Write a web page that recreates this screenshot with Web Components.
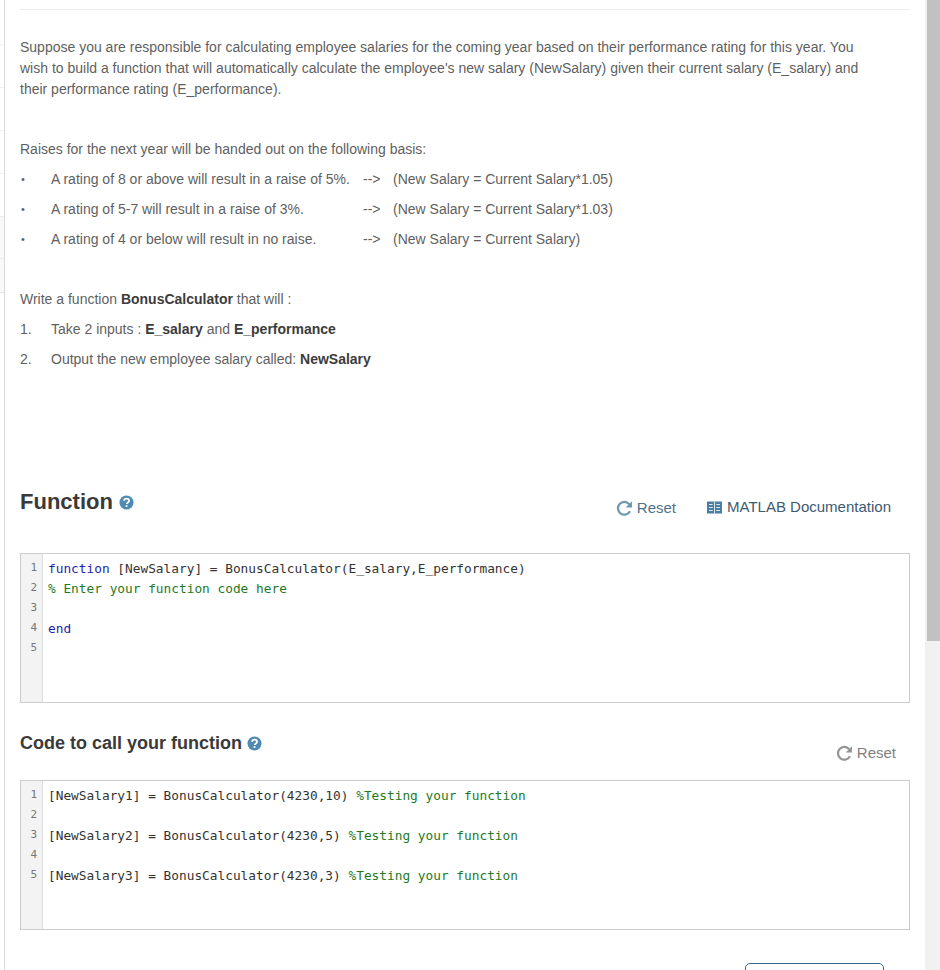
<!DOCTYPE html>
<html>
<head>
<meta charset="utf-8">
<title>Function</title>
<style>
  html, body { margin: 0; height: 100%; overflow: hidden; background: #fff; }
  body { font-family: "Liberation Sans", Arial, sans-serif; color: #5f5f5f; }
</style>
</head>
<body>

<problem-page>
  <page-rule></page-rule>

  <prose-line>Suppose you are responsible for calculating employee salaries for the coming year based on their performance rating for this year. You wish to build a function that will automatically calculate the employee's new salary (NewSalary) given their current salary (E_salary) and their performance rating (E_performance).</prose-line>
  <prose-line></prose-line>
  <prose-line>Raises for the next year will be handed out on the following basis:</prose-line>
  <raise-row mark="•" formula="(New Salary = Current Salary*1.05)">A rating of 8 or above will result in a raise of 5%.</raise-row>
  <raise-row mark="•" formula="(New Salary = Current Salary*1.03)">A rating of 5-7 will result in a raise of 3%.</raise-row>
  <raise-row mark="•" formula="(New Salary = Current Salary)">A rating of 4 or below will result in no raise.</raise-row>
  <prose-line></prose-line>
  <prose-line>Write a function <b-text>BonusCalculator</b-text> that will :</prose-line>
  <raise-row mark="1.">Take 2 inputs : <b-text>E_salary</b-text> and <b-text>E_performance</b-text></raise-row>
  <raise-row mark="2.">Output the new employee salary called: <b-text>NewSalary</b-text></raise-row>

  <section-head level="1" title="Function" style="margin-top:119px">
    <reset-link tone="blue"></reset-link>
    <doc-link>MATLAB Documentation</doc-link>
  </section-head>
  <code-editor style="margin-top:35px">
    <code-line><code-token kind="kw">function</code-token> [NewSalary] = BonusCalculator(E_salary,E_performance)</code-line>
    <code-line><code-token kind="cm">% Enter your function code here</code-token></code-line>
    <code-line></code-line>
    <code-line><code-token kind="kw">end</code-token></code-line>
    <code-line></code-line>
  </code-editor>

  <section-head level="2" title="Code to call your function" style="margin-top:27px">
    <reset-link tone="grey"></reset-link>
  </section-head>
  <code-editor style="margin-top:17px">
    <code-line>[NewSalary1] = BonusCalculator(4230,10) <code-token kind="cm">%Testing your function</code-token></code-line>
    <code-line></code-line>
    <code-line>[NewSalary2] = BonusCalculator(4230,5) <code-token kind="cm">%Testing your function</code-token></code-line>
    <code-line></code-line>
    <code-line>[NewSalary3] = BonusCalculator(4230,3) <code-token kind="cm">%Testing your function</code-token></code-line>
  </code-editor>

  <submit-stub></submit-stub>
</problem-page>

<script>
"use strict";

// Templates are written indented, so drop the whitespace between tags:
// code lines use white-space: pre and would render it as line breaks.
function shadow(el, html) {
  el.attachShadow({ mode: "open" }).innerHTML = html.replace(/>\s+</g, "><").trim();
}

class ProblemPage extends HTMLElement {
  constructor() {
    super();
    shadow(this, `
<style>
:host {
  display: flex;
  height: 970px;
  overflow: hidden;
}
.rail {
  flex: 0 0 4px;
  border-right: 1px solid #d9d9d9;
  background:
    linear-gradient(#eee, #eee) 0 44px / 100% 1px no-repeat,
    linear-gradient(#eee, #eee) 0 87px / 100% 1px no-repeat,
    linear-gradient(#eee, #eee) 0 130px / 100% 1px no-repeat,
    linear-gradient(#eee, #eee) 0 173px / 100% 1px no-repeat,
    linear-gradient(#eee, #eee) 0 216px / 100% 1px no-repeat,
    linear-gradient(#eee, #eee) 0 258px / 100% 1px no-repeat,
    linear-gradient(#e4e4e4, #e4e4e4) 0 292px / 100% 1px no-repeat,
    linear-gradient(#f9f9f9, #f9f9f9) 0 216px / 100% 76px no-repeat;
}
main {
  flex: 1;
  min-width: 0;
  padding: 9px 15px 0;
}
.track {
  flex: 0 0 13px;
  padding-left: 2px;
  background: #f1f1f1;
}
.thumb {
  height: 641px;
  background: #c1c1c1;
}
</style>
<div class="rail"></div>
<main><slot></slot></main>
<div class="track"><div class="thumb"></div></div>`);
  }
}
customElements.define("problem-page", ProblemPage);

class PageRule extends HTMLElement {
  constructor() {
    super();
    shadow(this, `<style>:host { display: block; height: 1px; background: #ececec; margin-bottom: 27px; }</style>`);
  }
}
customElements.define("page-rule", PageRule);

class ProseLine extends HTMLElement {
  constructor() {
    super();
    shadow(this, `
<style>
:host {
  display: block;
  max-width: 850px;
  min-height: 21px;
  margin-bottom: 9px;
  font-size: 14px;
  line-height: 21px;
  color: #5f5f5f;
}
</style>
<slot></slot>`);
  }
}
customElements.define("prose-line", ProseLine);

class BText extends HTMLElement {
  constructor() {
    super();
    shadow(this, `<style>:host { font-weight: 700; color: #3c3c3c; }</style><slot></slot>`);
  }
}
customElements.define("b-text", BText);

class RaiseRow extends HTMLElement {
  constructor() {
    super();
    shadow(this, `
<style>
:host {
  display: grid;
  grid-template-columns: 31px 312px 30px 1fr;
  height: 21px;
  margin-bottom: 9px;
  font-size: 14px;
  line-height: 21px;
  color: #5f5f5f;
  white-space: nowrap;
}
:host(:not([formula])) { grid-template-columns: 31px 1fr; }
:host(:not([formula])) .arrow, :host(:not([formula])) .formula { display: none; }
:host([mark="•"]) .mark { font-size: 11px; padding-left: 1px; }
</style>
<span class="mark"></span>
<span><slot></slot></span>
<span class="arrow">--&gt;</span>
<span class="formula"></span>`);
  }
  connectedCallback() {
    this.shadowRoot.querySelector(".mark").textContent = this.getAttribute("mark");
    this.shadowRoot.querySelector(".formula").textContent = this.getAttribute("formula") || "";
  }
}
customElements.define("raise-row", RaiseRow);

class SectionHead extends HTMLElement {
  constructor() {
    super();
    shadow(this, `
<style>
:host {
  display: flex;
  justify-content: space-between;
  align-items: flex-start;
}
h2 {
  display: flex;
  align-items: center;
  gap: 6px;
  margin: 0;
  color: #3a3a3a;
  font-weight: 700;
}
:host([level="1"]) h2 { font-size: 22px; line-height: 26px; }
:host([level="2"]) h2 { font-size: 18px; line-height: 26px; gap: 5px; }
svg { width: 15px; height: 15px; flex: none; }
.tools {
  display: flex;
  gap: 31px;
  padding: 9px 19px 0 0;
}
:host([level="2"]) .tools { padding: 13px 14px 0 0; }
</style>
<h2><span class="title"></span>
  <svg viewBox="0 0 16 16" aria-hidden="true">
    <circle cx="8" cy="8" r="7.5" fill="#4f8bb0"/>
    <path d="M5.4 6.2C5.5 4.6 6.6 3.8 8.1 3.8c1.5 0 2.6.9 2.6 2.2 0 1-.6 1.5-1.3 2-.6.4-.9.7-.9 1.4v.3" fill="none" stroke="#fff" stroke-width="1.9"/>
    <rect x="7.1" y="10.8" width="1.9" height="1.9" fill="#fff"/>
  </svg>
</h2>
<div class="tools"><slot></slot></div>`);
  }
  connectedCallback() {
    this.shadowRoot.querySelector(".title").textContent = this.getAttribute("title");
    this.removeAttribute("title");
  }
}
customElements.define("section-head", SectionHead);

class ResetLink extends HTMLElement {
  constructor() {
    super();
    shadow(this, `
<style>
:host {
  display: inline-flex;
  align-items: center;
  gap: 4px;
  font-size: 15px;
  line-height: 20px;
  color: #50718a;
}
:host([tone="grey"]) { color: #808080; }
svg { width: 17px; height: 17px; color: #6c97b0; }
:host([tone="grey"]) svg { color: #949494; }
</style>
<svg viewBox="0 0 16 16" aria-hidden="true">
  <path d="M13.2 10.6A6 6 0 1 1 12.4 3.9" fill="none" stroke="currentColor" stroke-width="2.1"/>
  <path d="M15 1.2V7H9.2Z" fill="currentColor"/>
</svg>
<span>Reset</span>`);
  }
}
customElements.define("reset-link", ResetLink);

class DocLink extends HTMLElement {
  constructor() {
    super();
    shadow(this, `
<style>
:host {
  display: inline-flex;
  align-items: center;
  gap: 5px;
  margin-top: -2px;
  font-size: 15px;
  line-height: 20px;
  color: #3d5a73;
}
svg { width: 15px; height: 13px; }
</style>
<svg viewBox="0 0 15 13" aria-hidden="true">
  <rect y="0.5" width="15" height="12" fill="#4a7fa5"/>
  <rect x="7" y="0.5" width="1" height="12" fill="#dce8f0"/>
  <path d="M2 3.5h3.8M2 6.5h3.8M2 9.5h3.8M9.2 3.5H13M9.2 6.5H13M9.2 9.5H13" stroke="#dce8f0" stroke-width="1.2"/>
</svg>
<span><slot></slot></span>`);
  }
}
customElements.define("doc-link", DocLink);

class CodeEditor extends HTMLElement {
  constructor() {
    super();
    shadow(this, `
<style>
:host {
  display: flex;
  box-sizing: border-box;
  height: 150px;
  border: 1px solid #ccc;
  background: #fff;
}
.gutter {
  flex: 0 0 22px;
  box-sizing: border-box;
  padding: 4px 5px 0 0;
  background: #f3f3f3;
  border-right: 1px solid #ddd;
  font: 11px/20px "DejaVu Sans Mono", monospace;
  color: #777;
  text-align: right;
}
.lines {
  flex: 1;
  padding: 5px 0 0 5px;
}
</style>
<div class="gutter"></div>
<div class="lines"><slot></slot></div>`);
  }
  connectedCallback() {
    const total = this.querySelectorAll("code-line").length;
    const numbers = [];
    for (let i = 1; i <= total; i++) {
      numbers.push("<div>" + i + "</div>");
    }
    this.shadowRoot.querySelector(".gutter").innerHTML = numbers.join("");
  }
}
customElements.define("code-editor", CodeEditor);

class CodeLine extends HTMLElement {
  constructor() {
    super();
    shadow(this, `
<style>
:host {
  display: block;
  height: 20px;
  font: 12.8px/20px "DejaVu Sans Mono", monospace;
  color: #333;
  white-space: pre;
}
</style>
<slot></slot>`);
  }
}
customElements.define("code-line", CodeLine);

class CodeToken extends HTMLElement {
  constructor() {
    super();
    shadow(this, `
<style>
:host([kind="kw"]) { color: #1f1fa8; }
:host([kind="cm"]) { color: #1f7a1f; }
</style>
<slot></slot>`);
  }
}
customElements.define("code-token", CodeToken);

class SubmitStub extends HTMLElement {
  constructor() {
    super();
    shadow(this, `
<style>
:host {
  display: block;
  box-sizing: border-box;
  width: 139px;
  height: 34px;
  margin: 33px 26px 0 auto;
  border: 1px solid #3a6a80;
  border-radius: 5px;
}
</style>`);
  }
}
customElements.define("submit-stub", SubmitStub);
</script>
</body>
</html>
